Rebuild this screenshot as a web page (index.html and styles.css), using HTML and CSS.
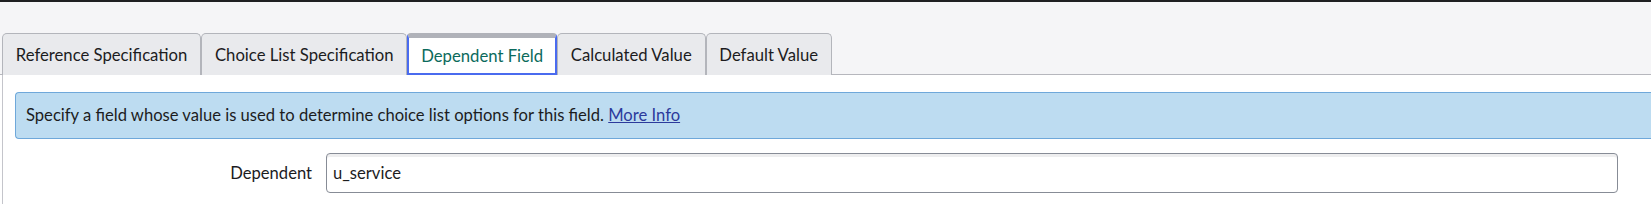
FILE: index.html
```html
<!DOCTYPE html>
<html>
<head>
<meta charset="utf-8">
<link rel="stylesheet" href="styles.css">
</head>
<body>
<div class="topline"></div>
<div class="header">
  <div class="tabs">
    <div class="tab">Reference Specification</div>
    <div class="tab">Choice List Specification</div>
    <div class="tab active">Dependent Field</div>
    <div class="tab">Calculated Value</div>
    <div class="tab">Default Value</div>
  </div>
</div>
<div class="content">
  <div class="info">Specify a field whose value is used to determine choice list options for this field. <a href="#" class="link">More Info</a></div>
  <div class="row">
    <label class="label">Dependent</label>
    <div class="input">u_service</div>
  </div>
</div>
</body>
</html>
```

FILE: styles.css
```css
* { box-sizing: border-box; }
html, body { margin: 0; padding: 0; }
body {
  width: 1651px;
  height: 205px;
  overflow: hidden;
  font-family: Lato, "Open Sans", sans-serif;
  font-size: 16.6px;
  color: #1c1c1e;
  background: #ffffff;
}
.topline { height: 2px; background: #1f2022; }
.header {
  background: #f5f5f7;
  padding: 31px 0 0 2px;
  border-bottom: 1px solid #b6b7bd;
}
.tabs { display: flex; align-items: flex-end; }
.tab {
  height: 42px;
  margin-bottom: -1px;
  padding: 0 12.8px;
  display: flex;
  align-items: center;
  font-size: 16.7px;
  background: #e9eaed;
  border: 1px solid #b3b5bb;
  border-bottom: none;
  border-radius: 5px 5px 0 0;
  white-space: nowrap;
}
.tab.active {
  background: #ffffff;
  color: #0b6a5c;
  padding: 0 11.8px;
  border: 2px solid #4a6bef;
  border-top: 5px solid #b0b2b9;
  border-bottom: 2px solid #4a6bef;
  border-radius: 4px 4px 0 0;
}
.content {
  margin-left: 2px;
  border-left: 1px solid #c4c5cb;
  padding: 17px 0 0 12px;
  height: 129px;
}
.info {
  background: #bddcf1;
  border: 1px solid #6fa8da;
  border-right: none;
  border-radius: 4px 0 0 4px;
  height: 47px;
  line-height: 45px;
  padding: 0 0 0 10px;
  white-space: nowrap;
}
.link { color: #2c3a9c; text-decoration: underline; }
.row {
  display: flex;
  align-items: center;
  margin-top: 14px;
}
.label {
  width: 297px;
  text-align: right;
  margin-right: 14px;
}
.input {
  width: 1292px;
  height: 40px;
  border: 1px solid #878c96;
  border-radius: 4px;
  box-shadow: inset 0 3px 0 #eeeeef;
  padding: 0 6px;
  display: flex;
  align-items: center;
}
```
